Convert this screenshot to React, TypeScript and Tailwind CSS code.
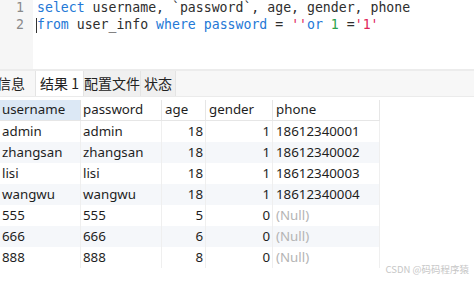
import React from 'react';

const rows = [
  { u: 'admin', p: 'admin', age: 18, g: 1, phone: '18612340001' },
  { u: 'zhangsan', p: 'zhangsan', age: 18, g: 1, phone: '18612340002' },
  { u: 'lisi', p: 'lisi', age: 18, g: 1, phone: '18612340003' },
  { u: 'wangwu', p: 'wangwu', age: 18, g: 1, phone: '18612340004' },
  { u: '555', p: '555', age: 5, g: 0, phone: null },
  { u: '666', p: '666', age: 6, g: 0, phone: null },
  { u: '888', p: '888', age: 8, g: 0, phone: null },
];

const cols = 'grid grid-cols-[81px_81px_44px_67px_107px] w-[380px]';

export default function App() {
  return (
    <div className="w-[474px] h-[283px] bg-white overflow-hidden font-['Noto_Sans','Noto_Sans_CJK_SC',sans-serif] text-[13.3px] text-[#1e1e1e]">
      {/* editor */}
      <div className="flex h-[71px] border-b-2 border-[#ececec]">
        <div className="w-[33px] bg-[#f6f6f6] text-right pr-[9px] font-['DejaVu_Sans_Mono',monospace] text-[13.2px] leading-[16.5px] text-[#8a8a8a]">
          <div>1</div>
          <div>2</div>
        </div>
        <div className="pl-[4px] font-['DejaVu_Sans_Mono',monospace] text-[13.2px] leading-[16.5px] text-[#2e2e2e] whitespace-pre">
          <div>
            <span className="text-[#2478d6]">select</span> username, `password`, age, gender, phone
          </div>
          <div className="relative">
            <span className="absolute left-[-1px] top-[1px] w-px h-[15px] bg-[#333]" />
            <span className="text-[#2478d6]">from</span> user_info <span className="text-[#2478d6]">where</span>{' '}
            <span className="text-[#2478d6]">password</span> = <span className="text-[#e0245a]">''</span>
            <span className="text-[#2478d6]">or</span> <span className="text-[#2ba24c]">1</span> =
            <span className="text-[#e0245a]">'1'</span>
          </div>
        </div>
      </div>

      {/* tabs */}
      <div className="flex h-[26px] items-stretch bg-[#f7f7f7] border-b border-[#ebebeb] font-['Noto_Sans_CJK_SC',sans-serif] text-[14px] text-[#222]">
        <div className="ml-[-13px] w-[48px] flex items-center justify-center">信息</div>
        <div className="w-[49px] flex items-center justify-center bg-white border-x border-[#e4e4e4]">结果 1</div>
        <div className="w-[57px] flex items-center justify-center bg-[#f0f0f0] border-r border-[#e4e4e4]">配置文件</div>
        <div className="w-[35px] flex items-center justify-center bg-[#f0f0f0] border-r border-[#e4e4e4]">状态</div>
      </div>

      {/* table */}
      <div className="mt-[3px]">
        <div className={`${cols} h-[21px] items-stretch border-b border-[#e6e6e6]`}>
          <div className="bg-[#dce8f5] pl-[2px] flex items-center border-r border-[#e2e2e2]">username</div>
          <div className="pl-[2px] flex items-center border-r border-[#e6e6e6]">password</div>
          <div className="pl-[3px] flex items-center border-r border-[#e6e6e6]">age</div>
          <div className="pl-[3px] flex items-center border-r border-[#e6e6e6]">gender</div>
          <div className="pl-[3px] flex items-center border-r border-[#e6e6e6]">phone</div>
        </div>
        {rows.map((r, i) => (
          <div
            key={r.u}
            className={`${cols} h-[21px] items-stretch ${i % 2 === 1 ? 'bg-[#f5f7fa]' : 'bg-white'}`}
          >
            <div className="pl-[2px] flex items-center border-r border-[#efefef]">{r.u}</div>
            <div className="pl-[2px] flex items-center border-r border-[#efefef]">{r.p}</div>
            <div className="pr-[2px] flex items-center justify-end border-r border-[#efefef]">{r.age}</div>
            <div className="pr-[2px] flex items-center justify-end border-r border-[#efefef]">{r.g}</div>
            <div className="pl-[3px] flex items-center border-r border-[#efefef]">
              {r.phone ?? <span className="text-[#b4b4b4]">(Null)</span>}
            </div>
          </div>
        ))}
      </div>

      <div className="flex justify-end pr-[5px] mt-[-6px] font-['Noto_Sans_CJK_SC',sans-serif] text-[9.5px] text-[#c6c6c6]">
        CSDN @码码程序猿
      </div>
    </div>
  );
}
